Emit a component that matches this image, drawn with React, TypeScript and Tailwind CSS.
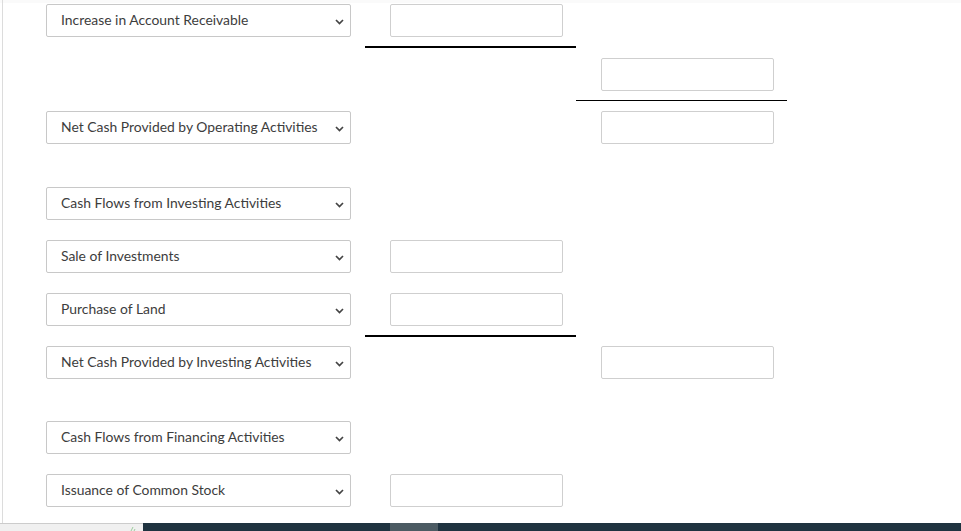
import React from "react";

const Chevron = () => (
  <svg width="9" height="6" viewBox="0 0 9 6" className="absolute right-[6px] top-[14px]">
    <path d="M1 1 L4.5 4.5 L8 1" fill="none" stroke="#444" strokeWidth="1.7" />
  </svg>
);

const Select = ({ label }: { label: string }) => (
  <div className="relative ml-[46px] flex h-[33px] w-[305px] items-center rounded-[2px] border border-[#c8c8c8] bg-white pl-[14px] text-[13.9px] text-[#3d3d3d]">
    {label}
    <Chevron />
  </div>
);

const Input = () => (
  <div className="ml-[25px] h-[33px] w-[173px] rounded-[2px] border border-[#cfcfcf] bg-white" />
);

type RowProps = { label?: string; c1?: boolean; c2?: boolean; mt: string };

const Row = ({ label, c1, c2, mt }: RowProps) => (
  <div className={`flex h-[33px] ${mt}`}>
    <div className="w-[365px] shrink-0">{label && <Select label={label} />}</div>
    <div className="w-[211px] shrink-0">{c1 && <Input />}</div>
    <div className="w-[211px] shrink-0">{c2 && <Input />}</div>
  </div>
);

const Line = ({ col, mt }: { col: 1 | 2; mt: string }) => (
  <div className={`flex h-[1.5px] ${mt}`}>
    <div className="w-[365px] shrink-0" />
    <div className={`w-[211px] shrink-0 h-full ${col === 1 ? "bg-black" : ""}`} />
    <div className={`w-[211px] shrink-0 h-full ${col === 2 ? "bg-black" : ""}`} />
  </div>
);

export default function App() {
  return (
    <div
      className="relative h-[531px] w-[961px] overflow-hidden bg-white"
      style={{ fontFamily: "Lato, 'Open Sans', sans-serif" }}
    >
      <div className="absolute left-0 right-0 top-0 h-[3px] bg-[#fafafa]" />
      <div className="absolute left-[2px] top-0 h-[523px] w-px bg-[#dcdcdc]" />
      <div className="flex h-[523px] flex-col pt-[4px]">
        <Row label="Increase in Account Receivable" c1 mt="mt-0" />
        <Line col={1} mt="mt-[9px]" />
        <Row c2 mt="mt-[10px]" />
        <Line col={2} mt="mt-[9px]" />
        <Row label="Net Cash Provided by Operating Activities" c2 mt="mt-[10px]" />
        <Row label="Cash Flows from Investing Activities" mt="mt-[43px]" />
        <Row label="Sale of Investments" c1 mt="mt-[20px]" />
        <Row label="Purchase of Land" c1 mt="mt-[20px]" />
        <Line col={1} mt="mt-[9px]" />
        <Row label="Net Cash Provided by Investing Activities" c2 mt="mt-[9px]" />
        <Row label="Cash Flows from Financing Activities" mt="mt-[42px]" />
        <Row label="Issuance of Common Stock" mt="mt-[20px]" c1 />
      </div>
      <div className="flex h-[8px]">
        <div className="relative w-[143px] shrink-0 border-t border-[#cccccc] bg-[#f0f0f0]">
          <svg width="8" height="8" viewBox="0 0 8 8" className="absolute right-[7px] top-[1px]">
            <path d="M2 8 L5 2 M5 8 L7 4" stroke="#9ccc9c" strokeWidth="1" fill="none" />
          </svg>
        </div>
        <div className="flex flex-1 bg-[#1f3340]">
          <div className="ml-[247px] w-[48px] bg-[#4c5b63]" />
        </div>
      </div>
    </div>
  );
}
